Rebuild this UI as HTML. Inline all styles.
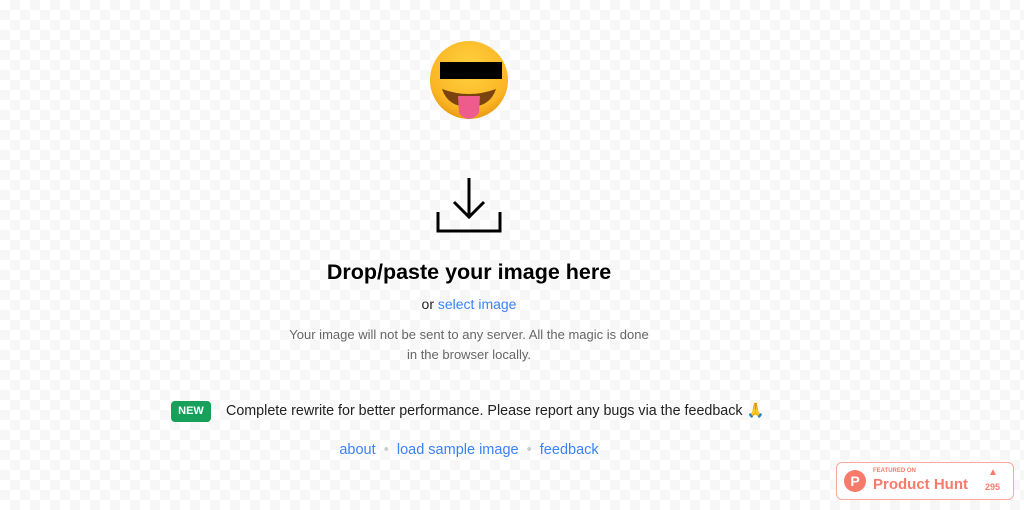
<!DOCTYPE html>
<html><head><meta charset="utf-8"><style>
body{margin:0;width:1024px;height:510px;overflow:hidden;font-family:"Liberation Sans",sans-serif;
background-color:#fff;background-image:linear-gradient(45deg,#f7f7f7 25%,transparent 25%,transparent 75%,#f7f7f7 75%),linear-gradient(45deg,#f7f7f7 25%,transparent 25%,transparent 75%,#f7f7f7 75%);background-size:20px 20px;background-position:0 0,10px 10px;position:relative}
.a{position:absolute}
a{color:#3b82f6;text-decoration:none}
</style></head><body>
<svg class="a" style="left:428px;top:39px" width="82" height="84" viewBox="0 0 82 84">
<defs><radialGradient id="g" cx="50%" cy="35%" r="65%"><stop offset="0" stop-color="#ffd23f"/><stop offset="0.8" stop-color="#fbb524"/><stop offset="1" stop-color="#e89a12"/></radialGradient></defs>
<circle cx="41" cy="41" r="39" fill="url(#g)"/>
<rect x="12" y="23" width="62" height="17" fill="#000"/>
<path d="M14 50 Q41 60 68 50 Q62 68 41 68 Q20 68 14 50Z" fill="#7a4310"/>
<path d="M30 57 L52 57 L51 74 Q41 86 31 74Z" fill="#ee5c8e"/>
</svg>
<svg class="a" style="left:436px;top:176px" width="66" height="58" viewBox="0 0 66 58" fill="none" stroke="#000" stroke-width="3">
<path d="M2 36V55H64V36"/><path d="M33 2V40"/><path d="M18 26L33 41L48 26"/>
</svg>
<div class="a" style="left:0;width:938px;top:260px;text-align:center;font-size:21.5px;font-weight:bold;color:#000">Drop/paste your image here</div>
<div class="a" style="left:0;width:938px;top:296px;text-align:center;font-size:14px;color:#222">or <a>select image</a></div>
<div class="a" style="left:0;width:938px;top:325px;text-align:center;font-size:13px;color:#666;line-height:20px">Your image will not be sent to any server. All the magic is done<br>in the browser locally.</div>
<div class="a" style="left:171px;top:401px;width:40px;height:21px;background:#16a05a;border-radius:4px;color:#fff;font-size:11px;font-weight:bold;text-align:center;line-height:21px">NEW</div>
<div class="a" style="left:226px;top:403px;font-size:14.3px;color:#222">Complete rewrite for better performance. Please report any bugs via the feedback <span style="color:#8b5cf6">🙏</span></div>
<div class="a" style="left:0;width:938px;top:442px;text-align:center;font-size:14.5px;color:#ccc"><a>about</a> &nbsp;•&nbsp; <a>load sample image</a> &nbsp;•&nbsp; <a>feedback</a></div>
<div class="a" style="left:836px;top:462px;width:176px;height:36px;border:1.5px solid #f9a9a0;border-radius:6px;background:#fff;color:#f87a6b">
<div class="a" style="left:7px;top:7px;width:22px;height:22px;border-radius:50%;background:#f87a6b;color:#fff;font-weight:bold;font-size:14px;text-align:center;line-height:22px">P</div>
<div class="a" style="left:36px;top:5px;font-size:6px;font-weight:bold">FEATURED ON</div>
<div class="a" style="left:36px;top:13px;font-size:15px;font-weight:bold">Product Hunt</div>
<div class="a" style="left:151px;top:4px;font-size:10px">▲</div>
<div class="a" style="left:148px;top:19px;font-size:9px;font-weight:bold">295</div>
</div>
</body></html>
